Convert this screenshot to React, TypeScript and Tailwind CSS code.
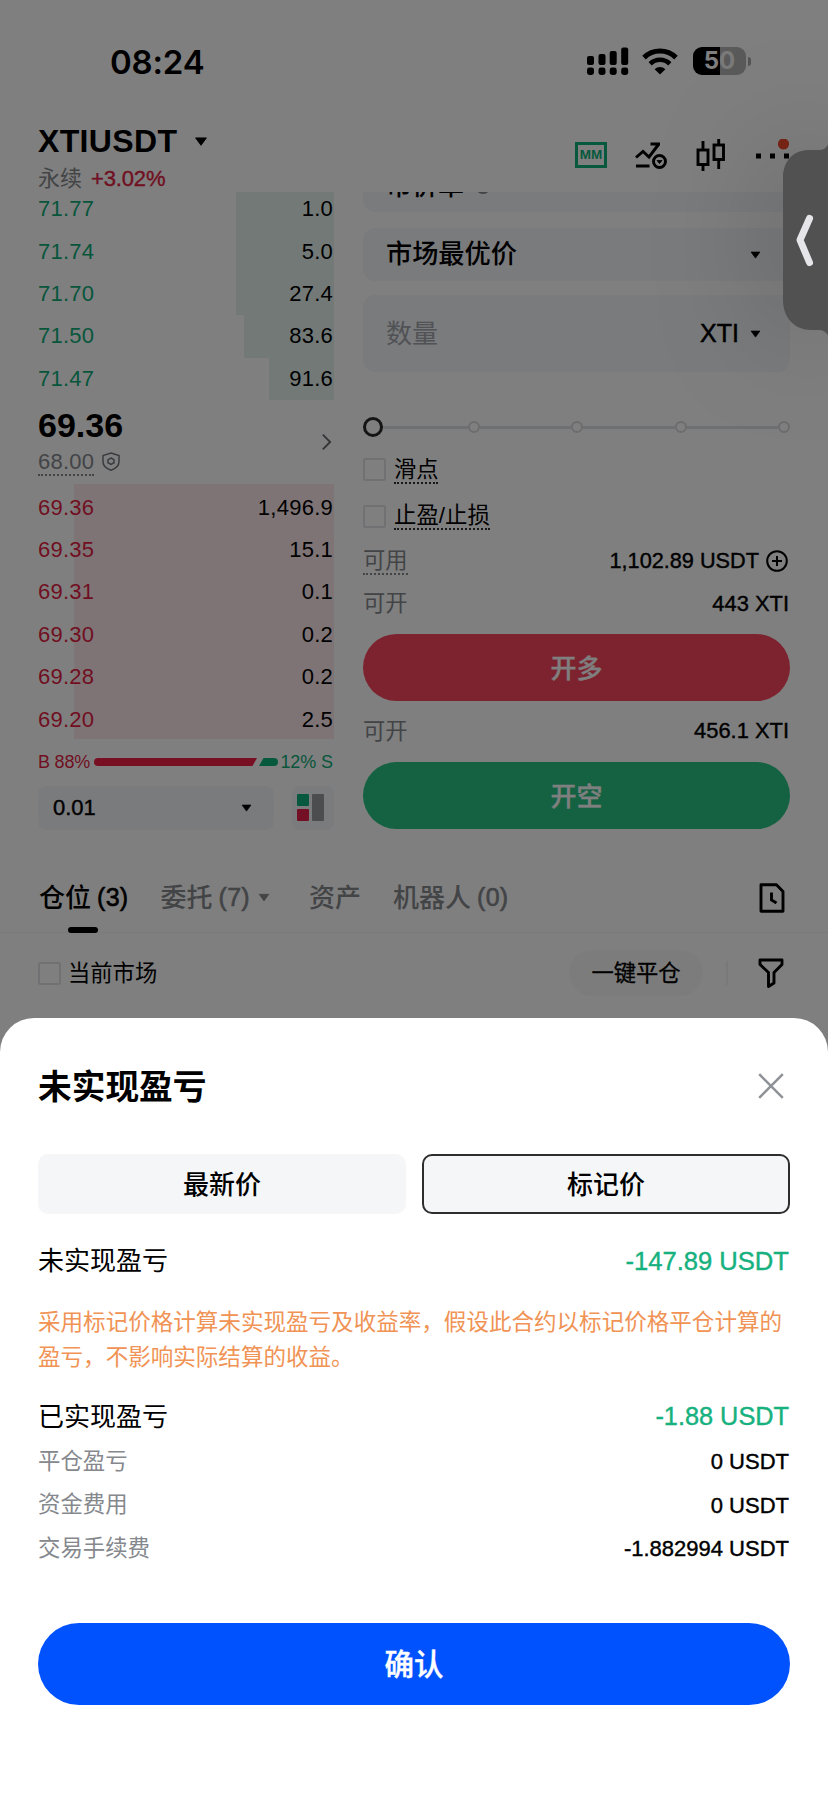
import React from 'react';
import clsx from 'clsx';

const bids = [
  { price: '71.77', amount: '1.0', depth: 33 },
  { price: '71.74', amount: '5.0', depth: 33 },
  { price: '71.70', amount: '27.4', depth: 33 },
  { price: '71.50', amount: '83.6', depth: 30.4 },
  { price: '71.47', amount: '91.6', depth: 22 },
];

const asks = [
  { price: '69.36', amount: '1,496.9', depth: 88 },
  { price: '69.35', amount: '15.1', depth: 88 },
  { price: '69.31', amount: '0.1', depth: 88 },
  { price: '69.30', amount: '0.2', depth: 88 },
  { price: '69.28', amount: '0.2', depth: 88 },
  { price: '69.20', amount: '2.5', depth: 88 },
];

const details = [
  { label: '平仓盈亏', value: '0 USDT' },
  { label: '资金费用', value: '0 USDT' },
  { label: '交易手续费', value: '-1.882994 USDT' },
];

const marks = [25, 50, 75, 100];

function Caret({ className }: { className?: string }) {
  return (
    <svg viewBox="0 0 12 8" className={clsx('shrink-0', className)}>
      <path d="M1.2 0.8h9.6L6 7.4z" fill="currentColor" stroke="currentColor" strokeWidth="0.8" strokeLinejoin="round" />
    </svg>
  );
}

function Checkbox() {
  return <span className="h-[23px] w-[23px] shrink-0 rounded-[2px] border-2 border-[#e2e3e6]" />;
}

function StatusBar() {
  return (
    <div className="flex h-[122px] items-center justify-between pl-[110px] pr-[77px]">
      <span className="pt-[2px] font-[Inter] text-[33px] font-semibold leading-none tracking-[-0.2px]">08:24</span>
      <div className="flex items-center">
        <svg viewBox="0 0 42 30" className="h-[30px] w-[42px]">
          <rect x="0" y="10" width="7" height="9" rx="2" />
          <rect x="11.5" y="8" width="7" height="11" rx="2" />
          <rect x="22.7" y="5" width="7" height="14" rx="2" />
          <rect x="34.2" y="1.5" width="7" height="17.5" rx="2" />
          <rect x="0" y="21.5" width="7" height="7.5" rx="2.4" />
          <rect x="11.5" y="21.5" width="7" height="7.5" rx="2.4" />
          <rect x="22.7" y="21.5" width="7" height="7.5" rx="2.4" />
          <rect x="34.2" y="21.5" width="7" height="7.5" rx="2.4" />
        </svg>
        <svg viewBox="0 0 36 27" className="ml-[13px] h-[27px] w-[36px]">
          <path d="M2 9.6a22.8 22.8 0 0 1 32 0" fill="none" stroke="#000" strokeWidth="5" />
          <path d="M8.2 15.8a14 14 0 0 1 19.600 0" fill="none" stroke="#000" strokeWidth="4.6" />
          <path d="M12.6 21.2a8 8 0 0 1 10.800 0L18 26.600z" />
        </svg>
        <div className="ml-[15px] flex h-[28px] w-[53px] items-center justify-center overflow-hidden rounded-[9px] bg-[linear-gradient(to_right,#000_27px,#b4b4b4_27px)] font-[Inter] text-[24px] font-bold leading-none">
          <span className="text-white">5</span>
          <span className="text-[#f4f4f4]">0</span>
        </div>
        <span className="ml-[2px] h-[9px] w-[3px] rounded-r-full bg-[#a8a8a8]" />
      </div>
    </div>
  );
}

function Header() {
  return (
    <div className="flex h-[70px] justify-between pl-[38px] pr-[37px]">
      <div>
        <div className="flex h-[38px] items-center">
          <span className="text-[32px] font-bold leading-none tracking-[0.350px]">XTIUSDT</span>
          <Caret className="ml-[17px] h-[9px] w-[14px]" />
        </div>
        <div className="flex h-[37px] items-center gap-[9px] text-[22px] leading-none">
          <span className="text-[#85888d]">永续</span>
          <span className="tracking-[-0.15px] text-[#e21f45] [-webkit-text-stroke:0.4px]">+3.02%</span>
        </div>
      </div>
      <div className="flex h-[66px] items-center">
        <span className="flex h-[26px] w-[32px] items-center justify-center border-3 border-[#0eb27a] text-[13.500px] font-bold leading-none text-[#0eb27a]">
          MM
        </span>
        <svg viewBox="0 0 32 27" className="ml-[28px] h-[27px] w-[32px]" fill="none" stroke="#000" strokeWidth="2.900">
          <path d="M1 15.500l7-6 6 5.500L23.500 2.500M15.500 2h9.500M1 24h13.500" />
          <circle cx="24.500" cy="19.500" r="6" />
          <path d="M22 18.500h5l-2.500 3z" fill="#000" strokeWidth="0.800" />
        </svg>
        <svg viewBox="0 0 30 32" className="ml-[29px] h-[32px] w-[30px]" fill="none" stroke="#000" strokeWidth="2.900">
          <rect x="2" y="11" width="10" height="14.500" />
          <path d="M7 2v9M7 25.500V32" />
          <rect x="18" y="6" width="9.500" height="14.500" />
          <path d="M22.700 0v6M22.700 20.500V30" />
        </svg>
        <svg viewBox="0 0 36 32" className="ml-[29px] h-[32px] w-[36px]">
          <path d="M1 14.500h5v5H1zM15 14.500h5v5h-5zM29 14.500h5v5h-5z" />
          <circle cx="28.500" cy="5" r="5.600" fill="#f34b2c" />
        </svg>
      </div>
    </div>
  );
}

type Level = { price: string; amount: string; depth: number };

function BookRow({ level, side }: { level: Level; side: 'bid' | 'ask' }) {
  return (
    <div className="relative flex h-[42.4px] items-center justify-between text-[22px] leading-none tracking-[0.250px]">
      <span
        className={clsx('absolute inset-y-0 right-0', side === 'bid' ? 'bg-[#e4f3ee]' : 'bg-[#fce9eb]')}
        style={{ width: `${level.depth}%` }}
      />
      <span className={clsx('relative', side === 'bid' ? 'text-[#0eac78]' : 'pt-[4px] text-[#e21f45]')}>{level.price}</span>
      <span className={clsx('relative pr-px', side === 'ask' && 'pt-[4px]')}>{level.amount}</span>
    </div>
  );
}

function OrderBook() {
  return (
    <div className="-mt-1 w-[296px]">
      {bids.map((level) => (
        <BookRow key={level.price} level={level} side="bid" />
      ))}
      <div className="flex h-[84.500px] items-center justify-between">
        <div>
          <div className="flex h-[39px] items-center pt-[3px] text-[34px] font-bold leading-none">69.36</div>
          <div className="flex h-[38px] items-center gap-[8px]">
            <span className="mt-[3px] border-b-2 border-dotted border-[#85888d] text-[22px] leading-[24px] tracking-[0.250px] text-[#85888d]">68.00</span>
            <svg viewBox="0 0 18 19" className="h-[19px] w-[18px]" fill="none" stroke="#74777c" strokeWidth="1.500">
              <path d="M9 1l8 2.500v6c0 4-3 7-8 8.700-5-1.700-8-4.700-8-8.700v-6z" />
              <path d="M9 6l3 1.700v3L9 12.400l-3-1.700v-3z" />
            </svg>
          </div>
        </div>
        <svg viewBox="0 0 12 18" className="mr-[2px] h-[18px] w-[11px]" fill="none" stroke="#66696e" strokeWidth="2">
          <path d="M2 1l8 8-8 8" />
        </svg>
      </div>
      {asks.map((level) => (
        <BookRow key={level.price} level={level} side="ask" />
      ))}
      <div className="flex h-[47px] items-center text-[18px] leading-none">
        <span className="w-[52px] shrink-0 whitespace-nowrap tracking-[-0.200px] text-[#e21f45]">B 88%</span>
        <svg viewBox="0 0 184 8" className="ml-[4px] h-[8px] w-[184px]">
          <path d="M4 0h159l-4.500 8H4a4 4 0 0 1 0-8z" fill="#f01f45" />
          <path d="M169.500 0H180a4 4 0 0 1 0 8h-15z" fill="#0eb27a" />
        </svg>
        <span className="ml-auto whitespace-nowrap pr-px tracking-[-0.100px] text-[#0eac78]">12% S</span>
      </div>
      <div className="flex h-[44px] justify-between">
        <div className="flex w-[236px] items-center justify-between rounded-lg bg-[#f5f6fa] pl-[15px] pr-[22px] text-[22px]">
          <span className="[-webkit-text-stroke:0.400px]">0.01</span>
          <Caret className="h-[8px] w-[11px]" />
        </div>
        <div className="flex w-[42px] items-center rounded-lg bg-[#f5f6fa] pl-[5px]">
          <svg viewBox="0 0 27 27" className="h-[27px] w-[27px]">
            <rect x="0" y="0" width="12" height="12" rx="1" fill="#0eb27a" />
            <rect x="0" y="15" width="12" height="12" rx="1" fill="#e8204a" />
            <rect x="15" y="0" width="12" height="27" rx="1" fill="#969a9e" />
          </svg>
        </div>
      </div>
    </div>
  );
}

function OrderForm() {
  return (
    <div className="-mt-8 w-[427px]">
      <div className="flex h-[52px] items-center gap-[11px] rounded-xl bg-[#f5f6fa] pl-[23px] text-[26px] font-medium leading-none">
        市价单
        <span className="h-[16px] w-[16px] rounded-full border-2 border-[#85888d]" />
      </div>
      <div className="mt-4 flex h-[53px] items-center justify-between rounded-xl bg-[#f5f6fa] pl-[23px] pr-[29px] text-[26.200px] font-medium leading-none">
        市场最优价
        <Caret className="h-[8px] w-[11px]" />
      </div>
      <div className="mt-[14px] flex h-[77px] items-center justify-between rounded-xl bg-[#f5f6fa] pl-[23px] pr-[29px] text-[26px] leading-none">
        <span className="text-[#a2a5aa]">数量</span>
        <span className="flex items-center gap-[11px] text-[25px] [-webkit-text-stroke:0.500px]">
          XTI
          <Caret className="h-[8px] w-[11px]" />
        </span>
      </div>
      <div className="mt-[45px] flex h-5 items-center">
        <span className="h-5 w-5 shrink-0 rounded-full border-[3px] border-[#2a2a2a]" />
        {marks.map((mark) => (
          <React.Fragment key={mark}>
            <span className={clsx('h-[3px] bg-[#dfe0e3]', mark === 25 ? 'w-[85px]' : 'flex-1')} />
            <span className="h-3 w-3 shrink-0 rounded-full border-2 border-[#d8d9dc]" />
          </React.Fragment>
        ))}
      </div>
      <div className="mt-[10px] flex h-[45px] items-center gap-[8px]">
        <Checkbox />
        <span className="border-b-2 border-dotted border-[#333] pt-px text-[22.200px] leading-[25px]">滑点</span>
      </div>
      <div className="flex h-[48px] items-center gap-[8px]">
        <Checkbox />
        <span className="border-b-2 border-dotted border-[#333] pt-px text-[22.400px] leading-[25px]">止盈/止损</span>
      </div>
      <div className="flex h-[43px] items-center justify-between text-[22.300px]">
        <span className="border-b-2 border-dotted border-[#85888d] leading-[25px] text-[#85888d]">可用</span>
        <span className="flex items-center text-[21.700px] [-webkit-text-stroke:0.400px]">
          1,102.89 USDT
          <svg viewBox="0 0 22 22" className="ml-[7px] mr-[2px] h-[22px] w-[22px]" fill="none" stroke="#000" strokeWidth="2">
            <circle cx="11" cy="11" r="9.800" />
            <path d="M11 6v10M6 11h10" />
          </svg>
        </span>
      </div>
      <div className="flex h-[42px] items-center justify-between text-[22.300px]">
        <span className="text-[#85888d]">可开</span>
        <span className="pr-px text-[21.900px] [-webkit-text-stroke:0.400px]">443 XTI</span>
      </div>
      <button className="mt-[9px] block h-[67px] w-full rounded-full bg-[#fb465e] pt-[2px] text-[26px] font-medium leading-none text-white [-webkit-text-stroke:0.300px]">
        开多
      </button>
      <div className="flex h-[61px] items-center justify-between text-[22.300px]">
        <span className="text-[#85888d]">可开</span>
        <span className="pr-px text-[21.900px] [-webkit-text-stroke:0.400px]">456.1 XTI</span>
      </div>
      <button className="block h-[67px] w-full rounded-full bg-[#28c485] pt-[2px] text-[26px] font-medium leading-none text-white [-webkit-text-stroke:0.300px]">
        开空
      </button>
    </div>
  );
}

function Positions() {
  return (
    <div>
      <div className="flex h-[71px] items-center border-b border-[#f4f4f6] pl-[39px] pr-[43px] pt-[1px] text-[26px] font-medium leading-none text-[#85888d]">
        <div className="relative flex h-full items-center gap-[6px] text-black">
          仓位<span className="text-[25px] tracking-[0.300px] [-webkit-text-stroke:0.600px]">(3)</span>
          <span className="absolute -bottom-[1px] left-[29px] h-[6px] w-[30px] rounded-full bg-black" />
        </div>
        <div className="ml-[32px] flex items-center gap-[6px]">
          委托<span className="text-[25px] tracking-[0.300px] [-webkit-text-stroke:0.600px]">(7)</span>
          <Caret className="ml-[2px] h-[9px] w-[12px]" />
        </div>
        <div className="ml-[39px]">资产</div>
        <div className="ml-[32px] flex items-center gap-[6px]">
          机器人<span className="text-[25px] tracking-[0.300px] [-webkit-text-stroke:0.600px]">(0)</span>
        </div>
        <svg viewBox="0 0 26 30" className="ml-auto h-[30px] w-[26px]" fill="none" stroke="#000" strokeWidth="2.900">
          <path d="M2 1.800h15.500L24 8.500v19.700H2z" strokeLinejoin="round" />
          <path d="M12.500 9.500v7.500l5 3" />
        </svg>
      </div>
      <div className="flex h-[80px] items-center pl-[38px] pr-[44px]">
        <Checkbox />
        <span className="ml-[7px] pt-[2px] text-[22.300px] leading-none">当前市场</span>
        <button className="ml-auto h-[46px] w-[134px] rounded-full bg-[#f9f9f9] pt-[2px] text-[22.300px] leading-none [-webkit-text-stroke:0.300px]">
          一键平仓
        </button>
        <span className="ml-[23px] h-[24px] w-[2px] bg-[#f2f2f4]" />
        <svg viewBox="0 0 26 30" className="ml-[30px] h-[30px] w-[26px]" fill="none" stroke="#000" strokeWidth="2.900" strokeLinejoin="round">
          <path d="M2 2h22v4.500L16 14.500V25l-5.500 3.500v-14L2 6.500z" />
        </svg>
      </div>
    </div>
  );
}

function SideHandle() {
  return (
    <svg viewBox="0 0 46 190" className="absolute right-0 top-[145px] h-[190px] w-[46px] drop-shadow-[0_0_60px_rgba(0,0,0,0.3)]">
      <path d="M46 0c-2 3-5 5-9 5h-9C12 5 1 15 1 33v122c0 18 12 30 28 30h8c4 0 7 2 9 5z" fill="#515151" />
      <path d="M27.500 73.500L18 95l9.500 22.500" fill="none" stroke="#e6e6ea" strokeWidth="7" strokeLinecap="round" strokeLinejoin="round" />
    </svg>
  );
}

function PnlSheet() {
  return (
    <div className="absolute inset-x-0 bottom-0 h-[782px] rounded-t-[34px] bg-white px-[38px] pt-[34px]">
      <div className="flex h-[68px] items-center justify-between pr-[6px]">
        <h2 className="pt-[3px] text-[33.700px] font-bold leading-none">未实现盈亏</h2>
        <svg viewBox="0 0 26 26" className="h-[26px] w-[26px]" fill="none" stroke="#8e9195" strokeWidth="2.500">
          <path d="M1.200 1.200l23.600 23.600M24.800 1.200L1.200 24.800" />
        </svg>
      </div>
      <div className="mt-[34px] grid grid-cols-2 gap-4 text-[26px] font-medium">
        <button className="h-[60px] rounded-[10px] bg-[#f5f6f8] pt-[1px] leading-none">最新价</button>
        <button className="h-[60px] rounded-[10px] border-2 border-[#2e2e2e] bg-[#f5f6f8] pt-[1px] leading-none">标记价</button>
      </div>
      <div className="mt-[27px] flex h-10 items-center justify-between">
        <span className="text-[26px]">未实现盈亏</span>
        <span className="pr-px text-[25.600px] text-[#16b17e] [-webkit-text-stroke:0.400px]">-147.89 USDT</span>
      </div>
      <p className="mt-[24px] whitespace-nowrap text-[22.550px] leading-[35px] text-[#f09355]">
        采用标记价格计算未实现盈亏及收益率，假设此合约以标记价格平仓计算的
        <br />
        盈亏，不影响实际结算的收益。
      </p>
      <div className="mt-[22px] flex h-10 items-center justify-between">
        <span className="text-[26px]">已实现盈亏</span>
        <span className="pr-px text-[25.300px] text-[#16b17e] [-webkit-text-stroke:0.400px]">-1.88 USDT</span>
      </div>
      <div className="mt-[3px]">
        {details.map((row) => (
          <div key={row.label} className="flex h-[43.500px] items-center justify-between text-[22.400px]">
            <span className="text-[#85888d]">{row.label}</span>
            <span className="pr-px text-[22px] [-webkit-text-stroke:0.400px]">{row.value}</span>
          </div>
        ))}
      </div>
      <button className="mt-[52px] block h-[82px] w-full rounded-full bg-[#0052ff] pt-[2px] text-[29.500px] font-medium leading-none text-white [-webkit-text-stroke:0.400px]">
        确认
      </button>
    </div>
  );
}

export default function App() {
  return (
    <div className="relative h-[1800px] w-[828px] overflow-hidden bg-white font-['Liberation_Sans','Noto_Sans_CJK_SC',sans-serif] text-black">
      <StatusBar />
      <Header />
      <div className="flex h-[670px] items-start justify-between overflow-hidden px-[38px]">
        <OrderBook />
        <OrderForm />
      </div>
      <Positions />
      <div className="absolute inset-0 bg-black/50" />
      <SideHandle />
      <PnlSheet />
    </div>
  );
}
